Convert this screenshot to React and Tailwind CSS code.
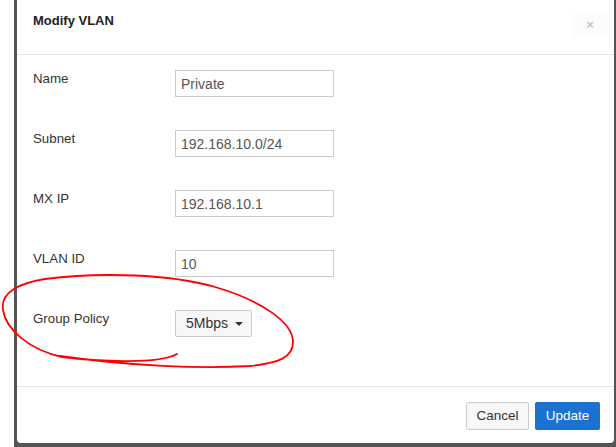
import React from 'react';

const rows = [
  { label: 'Name', value: 'Private' },
  { label: 'Subnet', value: '192.168.10.0/24' },
  { label: 'MX IP', value: '192.168.10.1' },
  { label: 'VLAN ID', value: '10' },
];

const Field = ({ label, children }) => (
  <div className="flex items-start">
    <label className="w-[142px] text-[13.3px] leading-[16px] text-[#333] pt-[1px]">{label}</label>
    {children}
  </div>
);

export default function App() {
  return (
    <div
      className="relative w-[616px] h-[447px] overflow-hidden bg-white"
      style={{ fontFamily: '"Liberation Sans", Arial, sans-serif' }}
    >
      <div className="ml-[14px] w-[602px] h-[447px] bg-[#555] pl-[3px] pb-[4px] pr-[2px]">
        <div className="flex flex-col h-full bg-white rounded-b-[4px]">
          {/* Header */}
          <div className="flex justify-between h-[55px] border-b border-[#e5e5e5] pl-[16px] pr-[7px]">
            <h4 className="pt-[13px] text-[13px] leading-[16px] font-bold text-[#222]">Modify VLAN</h4>
            <button className="mt-[12px] w-[34px] h-[25px] bg-[#fcfcfc] text-[#c4c4c4] text-[13px] font-bold leading-none flex items-center justify-center">
              ×
            </button>
          </div>

          {/* Body */}
          <div className="flex flex-col gap-[33px] pt-[15px] pl-[16px] h-[331px]">
            {rows.map((r) => (
              <Field key={r.label} label={r.label}>
                <input
                  readOnly
                  value={r.value}
                  className="w-[159px] h-[27px] border border-[#ccc] px-[5px] text-[14px] text-[#555] outline-none"
                  style={{ fontFamily: '"Liberation Sans", Arial, sans-serif' }}
                />
              </Field>
            ))}
            <Field label="Group Policy">
              <button className="flex items-center gap-[7px] w-[77px] h-[27px] border border-[#ccc] rounded-[2px] bg-[#f7f7f7] pl-[10px] text-[14px] text-[#333]">
                5Mbps
                <span className="w-0 h-0 border-l-[4px] border-r-[4px] border-t-[4px] border-l-transparent border-r-transparent border-t-[#333]" />
              </button>
            </Field>
          </div>

          {/* Footer */}
          <div className="flex justify-end gap-[6px] border-t border-[#e5e5e5] pt-[15px] pr-[14px]">
            <button className="w-[63px] h-[28px] border border-[#ccc] rounded-[2px] bg-[#f8f8f8] text-[13.5px] text-[#333]">
              Cancel
            </button>
            <button className="w-[65px] h-[28px] rounded-[2px] bg-[#1b72d0] text-[13.5px] text-white">
              Update
            </button>
          </div>
        </div>
      </div>

      {/* red hand-drawn annotation */}
      <svg className="absolute inset-0 pointer-events-none" width="616" height="447" viewBox="0 0 616 447">
        <path
          d="M 177 354 C 160 364, 100 362, 62 357 C 30 350, 6 330, 3 310 C 0 292, 20 283, 45 279 C 100 272, 170 274, 215 287 C 260 300, 293 322, 293 342 C 293 358, 278 363, 250 366 C 200 369, 130 366, 60 356"
          fill="none"
          stroke="#f00"
          strokeWidth="1.8"
          strokeLinecap="round"
          strokeLinejoin="round"
        />
      </svg>
    </div>
  );
}
